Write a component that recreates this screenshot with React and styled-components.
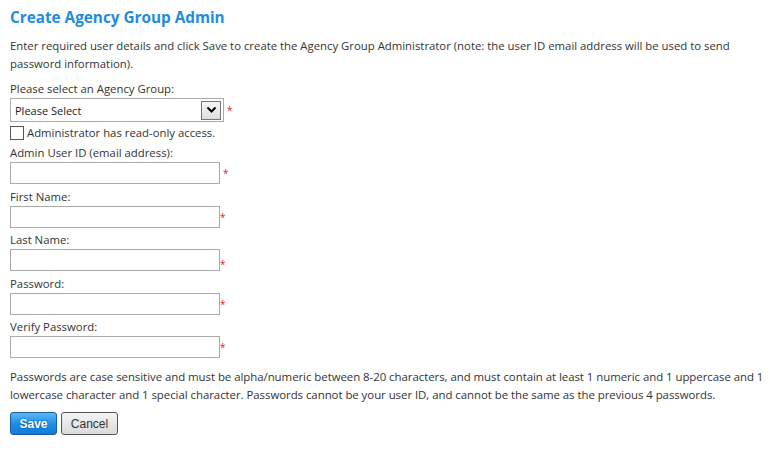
import React from 'react';
import styled, { createGlobalStyle } from 'styled-components';

const Global = createGlobalStyle`
  body {
    margin: 0;
    background: #fff;
    font-family: "Open Sans", "Noto Sans", Arial, sans-serif;
    font-size: 11.35px;
    color: #333;
  }
`;

const Page = styled.div`
  padding: 6px 3px 10px 10px;
`;

const Title = styled.h1`
  margin: 0 0 9px 0;
  font-size: 15.3px;
  font-weight: 700;
  color: #1c8de0;
  line-height: 22px;
`;

const Intro = styled.p`
  margin: 0 0 7px 0;
  line-height: 18px;
`;

const Label = styled.div`
  line-height: 18px;
  height: 18px;
`;

const Row = styled.div`
  display: flex;
  align-items: center;
  margin-bottom: ${(p) => p.$gap || 0}px;
`;

const SelectBox = styled.div`
  width: 208px;
  height: 22px;
  border: 1px solid #aaa;
  display: flex;
  align-items: center;
  justify-content: space-between;
  padding-left: 4px;
  box-sizing: content-box;
  font-size: 11px;
  color: #222;
`;

const Arrow = styled.span`
  width: 18px;
  height: 17px;
  margin-right: 2px;
  border: 1px solid #777;
  background: linear-gradient(#f6f6f6, #dedede);
  display: flex;
  align-items: center;
  justify-content: center;
`;

const Star = styled.span`
  color: #e8192c;
  font-size: 10px;
  margin-left: ${(p) => p.$offset || 0}px;
  margin-top: ${(p) => (p.$low ? 8 : 0)}px;
  line-height: 10px;
`;

const Check = styled.span`
  width: 12px;
  height: 12px;
  border: 1px solid #555;
  background: #fff;
  margin-right: 3px;
`;

const Field = styled.div`
  width: 208px;
  height: 20px;
  border: 1px solid #aaa;
  background: #fff;
`;

const Group = styled.div`
  margin-bottom: 3.6px;
`;

const Note = styled.p`
  margin: 10px 0 8px 0;
  line-height: 18px;
  font-size: 11.45px;
  letter-spacing: -0.05px;
`;

const Buttons = styled.div`
  display: flex;
  gap: 4px;
`;

const Button = styled.button`
  height: 23px;
  padding: 0;
  border-radius: 3px;
  font-family: "Liberation Sans", Arial, sans-serif;
  font-size: 12px;
  font-weight: ${(p) => (p.$primary ? 700 : 400)};
  color: ${(p) => (p.$primary ? '#fff' : '#333')};
  border: 1px solid ${(p) => (p.$primary ? '#1b5e9c' : '#555')};
  background: ${(p) =>
    p.$primary
      ? 'linear-gradient(#5ab8f5, #1a8ce6 55%, #0f7cd8)'
      : 'linear-gradient(#f4f4f4, #dadada)'};
  text-shadow: ${(p) => (p.$primary ? '0 0 2px #0b4a8a' : 'none')};
  width: ${(p) => p.$w}px;
`;

const fields = [
  { label: 'Admin User ID (email address):', offset: 3 },
  { label: 'First Name:', offset: 0 },
  { label: 'Last Name:', offset: 0, low: true },
  { label: 'Password:', offset: 0 },
  { label: 'Verify Password:', offset: 0 },
];

export default function App() {
  return (
    <Page>
      <Global />
      <Title>Create Agency Group Admin</Title>
      <Intro>
        Enter required user details and click Save to create the Agency Group Administrator (note: the user ID email
        address will be used to send password information).
      </Intro>
      <Label>Please select an Agency Group:</Label>
      <Row $gap={3}>
        <SelectBox>
          Please Select
          <Arrow>
            <svg width="11" height="8" viewBox="0 0 11 8">
              <path d="M1.5 1.5 L5.5 5.5 L9.5 1.5" fill="none" stroke="#000" strokeWidth="2" />
            </svg>
          </Arrow>
        </SelectBox>
        <Star $offset={3}>*</Star>
      </Row>
      <Row $gap={4}>
        <Check />
        Administrator has read-only access.
      </Row>
      {fields.map((f) => (
        <Group key={f.label}>
          <Label>{f.label}</Label>
          <Row>
            <Field />
            <Star $offset={f.offset} $low={f.low}>*</Star>
          </Row>
        </Group>
      ))}
      <Note>
        Passwords are case sensitive and must be alpha/numeric between 8-20 characters, and must contain at least 1
        numeric and 1 uppercase and 1 lowercase character and 1 special character. Passwords cannot be your user ID,
        and cannot be the same as the previous 4 passwords.
      </Note>
      <Buttons>
        <Button $primary $w={47}>Save</Button>
        <Button $w={57}>Cancel</Button>
      </Buttons>
    </Page>
  );
}
